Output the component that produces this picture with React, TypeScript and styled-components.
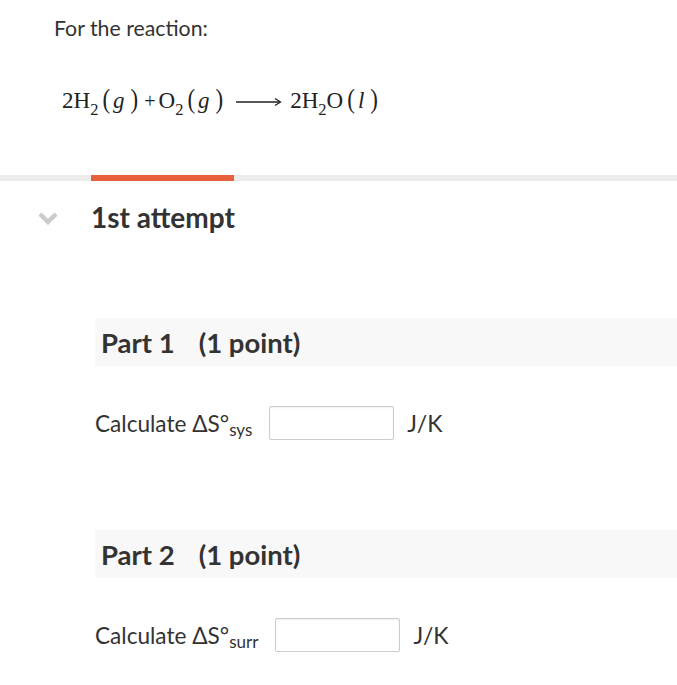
import React from "react";
import styled, { createGlobalStyle } from "styled-components";

const Global = createGlobalStyle`
  html, body { margin: 0; padding: 0; background: #fff; }
  body { font-family: Lato, "Open Sans", sans-serif; color: #333; }
`;

const Page = styled.div`
  width: 677px;
  height: 685px;
  overflow: hidden;
  background: #fff;
`;

const Intro = styled.div`
  padding: 15px 0 0 54px;
  height: 159px;
  box-sizing: border-box;
`;

const Lead = styled.div`
  font-size: 21.3px;
  line-height: 26px;
  color: #333;
`;

const Equation = styled.div`
  margin: 45px 0 0 8px;
  font-family: "Liberation Serif", "DejaVu Serif", serif;
  font-size: 23px;
  line-height: 30px;
  color: #222;
  white-space: nowrap;
`;

const Sub = styled.sub`
  font-size: 16.5px;
  vertical-align: -7px;
  line-height: 0;
`;

const It = styled.i`
  font-style: italic;
  padding: 0 2px 0 2px;
`;

const Paren = styled.span`
  display: inline-block;
  transform: scaleY(1.22);
  transform-origin: 50% 70%;
  margin: 0 1px 0 4px;
`;

const Plus = styled.span`
  display: inline-block;
  margin: 0 3px 0 5px;
  font-size: 20px;
`;

const Arrow = styled.svg`
  display: inline-block;
  margin: 0 8px 0 12px;
  width: 46px;
  height: 10px;
  vertical-align: 1px;
`;

const Tabs = styled.div`
  height: 6px;
  background: #ececec;
  margin-top: 16px;
  padding-left: 91px;
`;

const TabActive = styled.div`
  width: 143px;
  height: 6px;
  background: #e8603c;
`;

const AttemptRow = styled.div`
  display: flex;
  align-items: center;
  height: 34px;
  margin-top: 19px;
`;

const Chevron = styled.svg`
  width: 22px;
  height: 14px;
  margin: 2px 32px 0 37px;
`;

const AttemptTitle = styled.div`
  font-weight: 700;
  font-size: 28px;
  color: #333;
`;

const Body = styled.div`
  padding-left: 95px;
`;

const PartHeader = styled.div<{ $top: number }>`
  margin-top: ${(p) => p.$top}px;
  height: 48px;
  background: #f8f8f8;
  display: flex;
  align-items: center;
  padding-left: 6px;
  font-weight: 700;
  font-size: 27.5px;
  color: #333;
  gap: 24px;
`;

const QuestionRow = styled.div`
  display: flex;
  align-items: center;
  margin-top: 40px;
  height: 34px;
  font-size: 22.6px;
  color: #333;
`;

const Label = styled.span`
  display: inline-block;
  white-space: nowrap;
`;

const LabelSub = styled.sub`
  font-size: 17px;
  vertical-align: -4px;
  line-height: 0;
`;

const Field = styled.input<{ $left: number }>`
  box-sizing: border-box;
  width: 125px;
  height: 34px;
  margin-left: ${(p) => p.$left}px;
  border: 1px solid #cccccc;
  border-radius: 2px;
  box-shadow: inset 0 1px 2px rgba(0, 0, 0, 0.06);
  background: #fff;
`;

const Unit = styled.span`
  margin-left: 13px;
  font-size: 23px;
  color: #333;
`;

export default function App() {
  return (
    <Page>
      <Global />
      <Intro>
        <Lead>For the reaction:</Lead>
        <Equation>
          2H<Sub>2</Sub>
          <Paren>(</Paren>
          <It>g</It>
          <Paren>)</Paren>
          <Plus>+</Plus>O<Sub>2</Sub>
          <Paren>(</Paren>
          <It>g</It>
          <Paren>)</Paren>
          <Arrow viewBox="0 0 46 10">
            <line x1="0" y1="5" x2="44" y2="5" stroke="#222" strokeWidth="1.3" />
            <path d="M39 1.5 L44.5 5 L39 8.5" fill="none" stroke="#222" strokeWidth="1.3" />
          </Arrow>
          2H<Sub>2</Sub>O<Paren>(</Paren>
          <It>l</It>
          <Paren>)</Paren>
        </Equation>
      </Intro>
      <Tabs>
        <TabActive />
      </Tabs>
      <AttemptRow>
        <Chevron viewBox="0 0 22 14">
          <path d="M3 3 L11 11 L19 3" fill="none" stroke="#cccccc" strokeWidth="4.5" />
        </Chevron>
        <AttemptTitle>1st attempt</AttemptTitle>
      </AttemptRow>
      <Body>
        <PartHeader $top={84}>
          <span>Part 1</span>
          <span>(1 point)</span>
        </PartHeader>
        <QuestionRow>
          <Label>
            Calculate ΔS°<LabelSub>sys</LabelSub>
          </Label>
          <Field $left={17} />
          <Unit>J/K</Unit>
        </QuestionRow>
        <PartHeader $top={90}>
          <span>Part 2</span>
          <span>(1 point)</span>
        </PartHeader>
        <QuestionRow>
          <Label>
            Calculate ΔS°<LabelSub>surr</LabelSub>
          </Label>
          <Field $left={17} />
          <Unit>J/K</Unit>
        </QuestionRow>
      </Body>
    </Page>
  );
}
